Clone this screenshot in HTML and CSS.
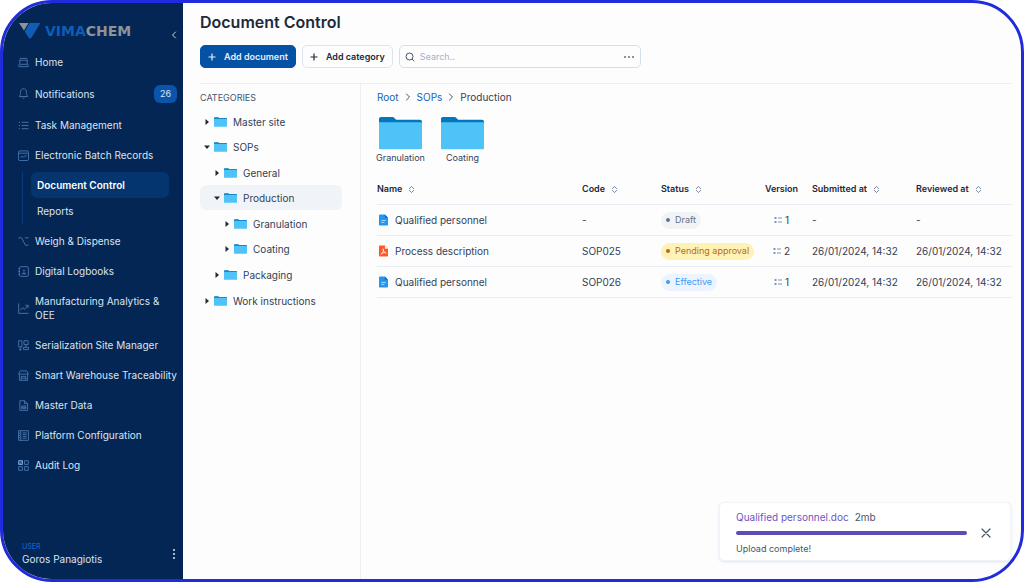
FILE: index.html
```html
<!DOCTYPE html>
<html lang="en">

<head>
    <meta charset="UTF-8">
    <meta name="viewport" content="width=device-width, initial-scale=1.0">
    <title>Document Control</title>
    <link rel="stylesheet" href="styles.css">
</head>

<body>
    <!-- shared icons -->
    <svg class="sprite" aria-hidden="true">
        <symbol id="folder" viewBox="0 0 44 34">
            <path d="M0 2.500Q0 .5 2 .5H13.500Q15 .5 16 2L17.500 3.500H42Q44 3.500 44 5.500V12H0Z" fill="#0277bd" />
            <path d="M0 6H43Q44 6 44 7V32.500Q44 33.500 43 33.500H1Q0 33.500 0 32.500Z" fill="#4fc3f7" />
        </symbol>
        <symbol id="caret" viewBox="0 0 6 6">
            <path d="M1.500 0L5 3L1.500 6Z" fill="#1e293b" />
        </symbol>
        <symbol id="sort" viewBox="0 0 8 10">
            <path d="M1.500 4L4 1.500L6.500 4M1.500 6L4 8.500L6.500 6" fill="none" stroke="#64748b" stroke-linecap="round" stroke-linejoin="round" />
        </symbol>
        <symbol id="doc" viewBox="0 0 10 12">
            <path d="M1 0H6.500L10 3.500V11Q10 12 9 12H1Q0 12 0 11V1Q0 0 1 0Z" fill="#2196f3" />
            <path d="M6.500 0L10 3.500H6.500Z" fill="#1565c0" />
            <path d="M2.500 6.500H7.500M2.500 8.700H6" stroke="#bbdefb" />
        </symbol>
        <symbol id="pdf" viewBox="0 0 10 12">
            <path d="M1 0H6.500L10 3.500V11Q10 12 9 12H1Q0 12 0 11V1Q0 0 1 0Z" fill="#ff5722" />
            <path d="M6.500 0L10 3.500H6.500Z" fill="#fbe9e7" />
            <path d="M4.500 3.500C5.500 6 4 8.500 2 9.800C3.500 7.800 6 7.300 8 8.300C6.500 8.300 4.700 6.500 4.500 3.500Z" fill="none" stroke="#fff" stroke-width=".8" />
        </symbol>
        <symbol id="versions" viewBox="0 0 8 8">
            <path d="M0 2H3M0 6H3M1.500 1V3M1.500 5V7" stroke="#7f93b2" />
            <path d="M4 2H8M4 6H8" stroke="#7f93b2" />
        </symbol>
        <symbol id="chevron" viewBox="0 0 6 8">
            <path d="M1.500 1L4.500 4L1.500 7" fill="none" stroke="#475569" stroke-linecap="round" stroke-linejoin="round" />
        </symbol>
        <symbol id="plus" viewBox="0 0 8 8">
            <path d="M4 .5V7.500M.5 4H7.500" stroke="currentColor" stroke-width="1.200" />
        </symbol>
    </svg>

    <div class="app">
        <aside class="sidebar">
            <div class="brand">
                <svg class="brand-mark" viewBox="0 0 22 16" aria-hidden="true">
                    <path d="M0 0H9.500L5 7.500Z" fill="#8f9296" />
                    <path d="M10.500 0H21.500L12.500 14.500Q11 16.500 9.500 14.500L5.800 8.500Z" fill="#0f5db4" />
                </svg>
                <span class="brand-name"><span class="brand-blue">VIMA</span>CHEM</span>
                <button class="collapse" aria-label="Collapse menu">
                    <svg viewBox="0 0 6 8"><path d="M4.500 1L1.500 4L4.500 7" fill="none" stroke="#cbd5e1" stroke-linecap="round" /></svg>
                </button>
            </div>

            <nav class="menu">
                <a class="menu-item" href="#">
                    <svg class="menu-icon" viewBox="0 0 12 12"><path d="M2 1.500H10M1 3.500H11M2 3.500V8H10V3.500M1 8V10.500H11V8" /></svg>
                    Home
                </a>
                <a class="menu-item notifications" href="#">
                    <svg class="menu-icon" viewBox="0 0 12 12"><path d="M6 .8C3.800 .8 2.800 2.500 2.800 4.500C2.800 7 2.300 8 1.300 9.300H10.700C9.700 8 9.200 7 9.200 4.500C9.200 2.500 8.200 .8 6 .8ZM4.800 10.500Q6 12 7.200 10.500" /></svg>
                    Notifications
                    <span class="count">26</span>
                </a>
                <a class="menu-item" href="#">
                    <svg class="menu-icon" viewBox="0 0 12 12"><path d="M4 2.500H11.500M4 6H11.500M4 9.500H11.500M1 2.500H2.200M1 6H2.200M1 9.500H2.200" /></svg>
                    Task Management
                </a>
                <a class="menu-item" href="#">
                    <svg class="menu-icon" viewBox="0 0 12 12"><path d="M2 1H10Q11.500 1 11.500 2.500V10Q11.500 11.500 10 11.500H2Q.5 11.500 .5 10V2.500Q.5 1 2 1ZM.5 3.500H11.500M3 8.500L4.500 6.500L6 8L7 8M7 6.500H9.500" /></svg>
                    Electronic Batch Records
                </a>
                <div class="submenu">
                    <a class="submenu-item active" href="#">Document Control</a>
                    <a class="submenu-item" href="#">Reports</a>
                </div>
                <a class="menu-item" href="#">
                    <svg class="menu-icon" viewBox="0 0 12 12"><path d="M.5 2H4L8 10H11.500M7.500 2H11.500" /></svg>
                    Weigh &amp; Dispense
                </a>
                <a class="menu-item" href="#">
                    <svg class="menu-icon" viewBox="0 0 12 12"><path d="M3 .8H10Q11.300 .8 11.300 2V10Q11.300 11.300 10 11.300H3Q1.500 11.300 1.500 10V2Q1.500 .8 3 .8ZM.3 3H2M.3 6H2M.3 9H2M4.500 8.500Q6.500 6 8.500 8.500ZM6 4.500H7V5.500H6Z" /></svg>
                    Digital Logbooks
                </a>
                <a class="menu-item" href="#">
                    <svg class="menu-icon" viewBox="0 0 12 12"><path d="M.7 .5V11.300H11.500M2.500 8L5 5L7 7L11 2.500M8 2.500H11V5.500" /></svg>
                    Manufacturing Analytics &amp; OEE
                </a>
                <a class="menu-item" href="#">
                    <svg class="menu-icon" viewBox="0 0 12 12"><path d="M.7 .8H4.300V7.500H.7ZM6.500 .8H11V5H6.500ZM2.500 7.500V11.300M1 9.800L2.500 11.300L4 9.800M6 8H11.500V10.500H6ZM8.700 5V8" /></svg>
                    Serialization Site Manager
                </a>
                <a class="menu-item" href="#">
                    <svg class="menu-icon" viewBox="0 0 12 12"><path d="M2.500 1H9.500L11.500 4.500H.5ZM1.500 4.500V11.300H10.500V4.500M3.500 11V7H8.500V11M3.500 9H8.500" /></svg>
                    Smart Warehouse Traceability
                </a>
                <a class="menu-item" href="#">
                    <svg class="menu-icon" viewBox="0 0 12 12"><path d="M2 .8H7L10.500 4V11.300H2ZM7 .8V4H10.500M4 6.500H8.500V9.500H4ZM4 8H8.500" /></svg>
                    Master Data
                </a>
                <a class="menu-item" href="#">
                    <svg class="menu-icon" viewBox="0 0 12 12"><path d="M.6 .8H11.400V11.300H.6ZM3 .8V11.300M5 3.200H9.500M5 5H9.500M5 7H9.500M5 9H9.500M1 3.500H2.500M1 6H2.500M1 8.500H2.500" /></svg>
                    Platform Configuration
                </a>
                <a class="menu-item" href="#">
                    <svg class="menu-icon" viewBox="0 0 12 12"><path d="M.8 .8H4.800V4.800H.8ZM7.200 .8H11.200V4.800H7.200ZM.8 7.200H4.800V11.200H.8ZM7.200 7.200H11.200V11.200H7.200Z" /><path d="M.8 .8H4.800V4.800H.8ZM1.500 3L2.500 4L4.500 1.500" stroke="#7fa9dc" /></svg>
                    Audit Log
                </a>
            </nav>

            <div class="user">
                <div>
                    <div class="user-label">USER</div>
                    <div class="user-name">Goros Panagiotis</div>
                </div>
                <button class="user-menu" aria-label="User menu">
                    <svg viewBox="0 0 4 10"><path d="M1 0H3V2H1ZM1 4H3V6H1ZM1 8H3V10H1Z" fill="#a9b8cc" /></svg>
                </button>
            </div>
        </aside>

        <main class="content">
            <h1>Document Control</h1>
            <div class="toolbar">
                <button class="btn primary"><svg><use href="#plus" /></svg>Add document</button>
                <button class="btn"><svg><use href="#plus" /></svg>Add category</button>
                <div class="search">
                    <svg viewBox="0 0 10 10" aria-hidden="true"><path d="M8 4.500A3.500 3.500 0 1 1 1 4.500A3.500 3.500 0 1 1 8 4.500ZM7 7L9.300 9.300" fill="none" stroke="#475569" /></svg>
                    <input type="search" placeholder="Search.." aria-label="Search documents">
                    <button class="more" aria-label="Search options">
                        <svg viewBox="0 0 10 2"><path d="M0 0H2V2H0ZM4 0H6V2H4ZM8 0H10V2H8Z" fill="#8a94a3" /></svg>
                    </button>
                </div>
            </div>

            <div class="panels">
                <section class="categories">
                    <h2>CATEGORIES</h2>
                    <ul class="tree">
                        <li><button class="node"><svg class="caret"><use href="#caret" /></svg><svg class="node-folder"><use href="#folder" /></svg>Master site</button></li>
                        <li>
                            <button class="node open"><svg class="caret"><use href="#caret" /></svg><svg class="node-folder"><use href="#folder" /></svg>SOPs</button>
                            <ul class="level-2">
                                <li><button class="node"><svg class="caret"><use href="#caret" /></svg><svg class="node-folder"><use href="#folder" /></svg>General</button></li>
                                <li>
                                    <button class="node open selected"><svg class="caret"><use href="#caret" /></svg><svg class="node-folder"><use href="#folder" /></svg>Production</button>
                                    <ul class="level-3">
                                        <li><button class="node"><svg class="caret"><use href="#caret" /></svg><svg class="node-folder"><use href="#folder" /></svg>Granulation</button></li>
                                        <li><button class="node"><svg class="caret"><use href="#caret" /></svg><svg class="node-folder"><use href="#folder" /></svg>Coating</button></li>
                                    </ul>
                                </li>
                                <li><button class="node"><svg class="caret"><use href="#caret" /></svg><svg class="node-folder"><use href="#folder" /></svg>Packaging</button></li>
                            </ul>
                        </li>
                        <li><button class="node"><svg class="caret"><use href="#caret" /></svg><svg class="node-folder"><use href="#folder" /></svg>Work instructions</button></li>
                    </ul>
                </section>

                <section class="documents">
                    <nav class="breadcrumb" aria-label="Breadcrumb">
                        <a href="#">Root</a>
                        <svg><use href="#chevron" /></svg>
                        <a href="#">SOPs</a>
                        <svg><use href="#chevron" /></svg>
                        <span>Production</span>
                    </nav>

                    <div class="folders">
                        <a class="folder" href="#"><svg><use href="#folder" /></svg>Granulation</a>
                        <a class="folder" href="#"><svg><use href="#folder" /></svg>Coating</a>
                    </div>

                    <table>
                        <colgroup>
                            <col>
                            <col class="col-code">
                            <col class="col-status">
                            <col class="col-version">
                            <col class="col-submitted">
                            <col class="col-reviewed">
                        </colgroup>
                        <thead>
                            <tr>
                                <th><button class="sort">Name<svg><use href="#sort" /></svg></button></th>
                                <th><button class="sort">Code<svg><use href="#sort" /></svg></button></th>
                                <th><button class="sort">Status<svg><use href="#sort" /></svg></button></th>
                                <th class="version">Version</th>
                                <th><button class="sort">Submitted at<svg><use href="#sort" /></svg></button></th>
                                <th><button class="sort">Reviewed at<svg><use href="#sort" /></svg></button></th>
                            </tr>
                        </thead>
                        <tbody>
                            <tr>
                                <td><a class="file" href="#"><svg><use href="#doc" /></svg>Qualified personnel</a></td>
                                <td>-</td>
                                <td><span class="status draft">Draft</span></td>
                                <td class="version"><svg><use href="#versions" /></svg>1</td>
                                <td>-</td>
                                <td>-</td>
                            </tr>
                            <tr>
                                <td><a class="file" href="#"><svg><use href="#pdf" /></svg>Process description</a></td>
                                <td>SOP025</td>
                                <td><span class="status pending">Pending approval</span></td>
                                <td class="version"><svg><use href="#versions" /></svg>2</td>
                                <td>26/01/2024, 14:32</td>
                                <td>26/01/2024, 14:32</td>
                            </tr>
                            <tr>
                                <td><a class="file" href="#"><svg><use href="#doc" /></svg>Qualified personnel</a></td>
                                <td>SOP026</td>
                                <td><span class="status effective">Effective</span></td>
                                <td class="version"><svg><use href="#versions" /></svg>1</td>
                                <td>26/01/2024, 14:32</td>
                                <td>26/01/2024, 14:32</td>
                            </tr>
                        </tbody>
                    </table>
                </section>
            </div>
        </main>

        <div class="toast" role="status">
            <div class="upload">
                <label for="upload-progress"><span class="upload-name">Qualified personnel.doc</span>2mb</label>
                <progress id="upload-progress" value="100" max="100"></progress>
                <p>Upload complete!</p>
            </div>
            <button class="close" aria-label="Close">
                <svg viewBox="0 0 10 10"><path d="M1 1L9 9M9 1L1 9" stroke="#475569" stroke-width="1.200" stroke-linecap="round" /></svg>
            </button>
        </div>
    </div>
</body>

</html>
```
FILE: styles.css
```css
* {
    box-sizing: border-box;
}

body {
    margin: 0;
    background: #fff;
    color: #334155;
    font: 10px/14px Inter, sans-serif;
}

button {
    border: 0;
    padding: 0;
    background: none;
    color: inherit;
    font: inherit;
    cursor: pointer;
}

a {
    color: inherit;
    text-decoration: none;
}

svg {
    display: block;
    flex: none;
}

.sprite {
    position: absolute;
    width: 0;
    height: 0;
}

.app {
    display: flex;
    position: relative;
    min-height: 100vh;
    border: 3px solid #1f2bdc;
    border-radius: 52px;
    overflow: hidden;
    background: #fdfdfe;
}

/* sidebar */
.sidebar {
    display: flex;
    flex-direction: column;
    flex: none;
    width: 180px;
    background: #042654;
    color: #dbe4f0;
    font-size: 10px;
}

.brand {
    display: flex;
    align-items: center;
    height: 44px;
    padding: 12px 6px 0 16px;
}

.brand-mark {
    width: 22px;
    height: 16px;
}

.brand-name {
    margin-left: 4px;
    color: #8f9296;
    font-family: "DejaVu Sans", sans-serif;
    font-size: 14px;
    font-weight: 700;
}

.brand-blue {
    color: #0f5db4;
}

.collapse {
    margin: 8px 0 0 auto;
}

.collapse svg {
    width: 6px;
    height: 8px;
}

.menu-item {
    display: flex;
    align-items: center;
    gap: 6px;
    padding: 8px 6px 8px 15px;
}

.notifications {
    height: 33px;
}

.menu-icon {
    width: 11px;
    height: 11px;
    fill: none;
    stroke: #4a76ad;
    stroke-width: 1;
}

.count {
    margin-left: auto;
    padding: 2px 6px;
    border-radius: 6px;
    background: #0a54ac;
    font-size: 9px;
}

.submenu {
    margin: 2px 14px 2px 19px;
    padding-left: 8px;
    border-left: 1px solid #063c80;
}

.submenu-item {
    display: block;
    padding: 6px;
    border-radius: 6px;
}

.submenu-item.active {
    background: #04356f;
    color: #fff;
    font-weight: 600;
}

.user {
    display: flex;
    align-items: center;
    justify-content: space-between;
    margin-top: auto;
    padding: 0 7px 13px 19px;
}

.user-label {
    color: #0f62c8;
    font-size: 7px;
    font-weight: 500;
    line-height: 10px;
}

.user-menu svg {
    width: 4px;
    height: 10px;
}

/* main area */
.content {
    display: flex;
    flex-direction: column;
    flex: 1;
    min-width: 0;
    padding: 8px 9px 0 17px;
}

h1 {
    margin: 0;
    color: #1e293b;
    font-size: 16px;
    font-weight: 600;
    line-height: 22px;
}

.toolbar {
    display: flex;
    gap: 6px;
    padding: 12px 0 15px;
    border-bottom: 1px solid #eceff3;
}

.btn {
    display: flex;
    align-items: center;
    gap: 8px;
    height: 23px;
    padding: 0 7px;
    border: 1px solid #dde4ee;
    border-radius: 5px;
    color: #1e293b;
    font-size: 9px;
    font-weight: 600;
}

.btn svg {
    width: 8px;
    height: 8px;
}

.btn.primary {
    border-color: #0352a5;
    background: #0352a5;
    color: #e6eef8;
}

.search {
    display: flex;
    align-items: center;
    gap: 5px;
    flex: 0 1 242px;
    padding: 0 6px 0 5px;
    border: 1px solid #d5deea;
    border-radius: 5px;
}

.search > svg {
    width: 10px;
    height: 10px;
}

.search input {
    flex: 1;
    min-width: 0;
    padding: 0;
    border: 0;
    outline: 0;
    background: none;
    color: inherit;
    font: inherit;
    font-size: 9px;
}

.search input::placeholder {
    color: #a3b1c9;
}

.more svg {
    width: 10px;
    height: 2px;
}

.panels {
    display: flex;
    flex: 1;
}

/* category tree */
.categories {
    flex: none;
    width: 161px;
    padding: 7px 18px 0 0;
    border-right: 1px solid #eceff3;
}

h2 {
    margin: 0 0 4px;
    color: #475569;
    font-size: 9px;
    font-weight: 400;
    line-height: 14px;
}

.tree,
.tree ul {
    margin: 0;
    padding: 0;
    list-style: none;
}

.tree ul {
    margin: 1px 0;
}

.node {
    display: flex;
    align-items: center;
    width: 100%;
    height: 25px;
    padding-left: 4px;
    border-radius: 6px;
}

.level-2 .node {
    padding-left: 14px;
}

.level-3 .node {
    padding-left: 24px;
}

.node.selected {
    background: #f0f4f8;
}

.caret {
    width: 6px;
    height: 6px;
}

.open .caret {
    transform: rotate(90deg);
}

.node-folder {
    width: 13px;
    height: 10px;
    margin: 0 6px 0 4px;
}

/* documents */
.documents {
    flex: 1;
    min-width: 0;
    padding: 6px 0 0 16px;
}

.breadcrumb {
    display: flex;
    align-items: center;
    gap: 6px;
}

.breadcrumb a {
    color: #1765b8;
}

.breadcrumb svg {
    width: 6px;
    height: 8px;
}

.folders {
    display: flex;
    gap: 15px;
    margin: 12px 0 9px;
}

.folder {
    display: flex;
    flex-direction: column;
    align-items: center;
    gap: 1px;
    width: 47px;
    font-size: 9px;
    line-height: 14px;
}

.folder svg {
    width: 43px;
    height: 34px;
}

table {
    width: 100%;
    table-layout: fixed;
    border-spacing: 0;
}

.col-code {
    width: 79px;
}

.col-status {
    width: 90px;
}

.col-version {
    width: 61px;
}

.col-submitted {
    width: 104px;
}

.col-reviewed {
    width: 96px;
}

th,
td {
    height: 31px;
    padding: 0;
    border-bottom: 1px solid #e9eef5;
    text-align: left;
    white-space: nowrap;
}

th {
    color: #1e293b;
    font-size: 9px;
    font-weight: 600;
}

.sort {
    display: flex;
    align-items: center;
    gap: 6px;
}

.sort svg {
    width: 7px;
    height: 9px;
}

.file {
    display: flex;
    align-items: center;
    gap: 7px;
    padding-left: 2px;
}

.file svg {
    width: 9px;
    height: 12px;
}

.version {
    text-align: center;
}

.version svg {
    display: inline-block;
    width: 8px;
    height: 8px;
    margin-right: 3px;
}

.status {
    display: inline-flex;
    align-items: center;
    gap: 5px;
    height: 17px;
    padding: 0 5px;
    border-radius: 9px;
    font-size: 9px;
}

.status::before {
    content: "";
    width: 4px;
    height: 4px;
    border-radius: 50%;
    background: currentColor;
}

.draft {
    background: #f1f3f5;
    color: #64748b;
}

.pending {
    background: #fef3b4;
    color: #b86a1a;
}

.effective {
    background: #ebf4ff;
    color: #4299f5;
}

/* upload message */
.toast {
    display: flex;
    align-items: center;
    gap: 14px;
    position: absolute;
    right: 10px;
    bottom: 18px;
    width: 292px;
    padding: 7px 19px 4px 16px;
    border: 1px solid #f1f4f9;
    border-radius: 5px;
    background: #fff;
    box-shadow: 0 1px 3px #dde4f0;
}

.upload {
    flex: 1;
    color: #475569;
}

.upload label {
    display: block;
}

.upload-name {
    margin-right: 6px;
    color: #6d55c0;
}

.upload progress {
    display: block;
    width: 100%;
    height: 4px;
    margin: 7px 0;
    border: 0;
    border-radius: 2px;
    overflow: hidden;
    appearance: none;
    background: #e2e8f0;
}

.upload progress::-webkit-progress-bar {
    background: #e2e8f0;
}

.upload progress::-webkit-progress-value {
    background: #5f4bb6;
}

.upload p {
    margin: 0;
    font-size: 9px;
}

.close svg {
    width: 10px;
    height: 10px;
}
```
